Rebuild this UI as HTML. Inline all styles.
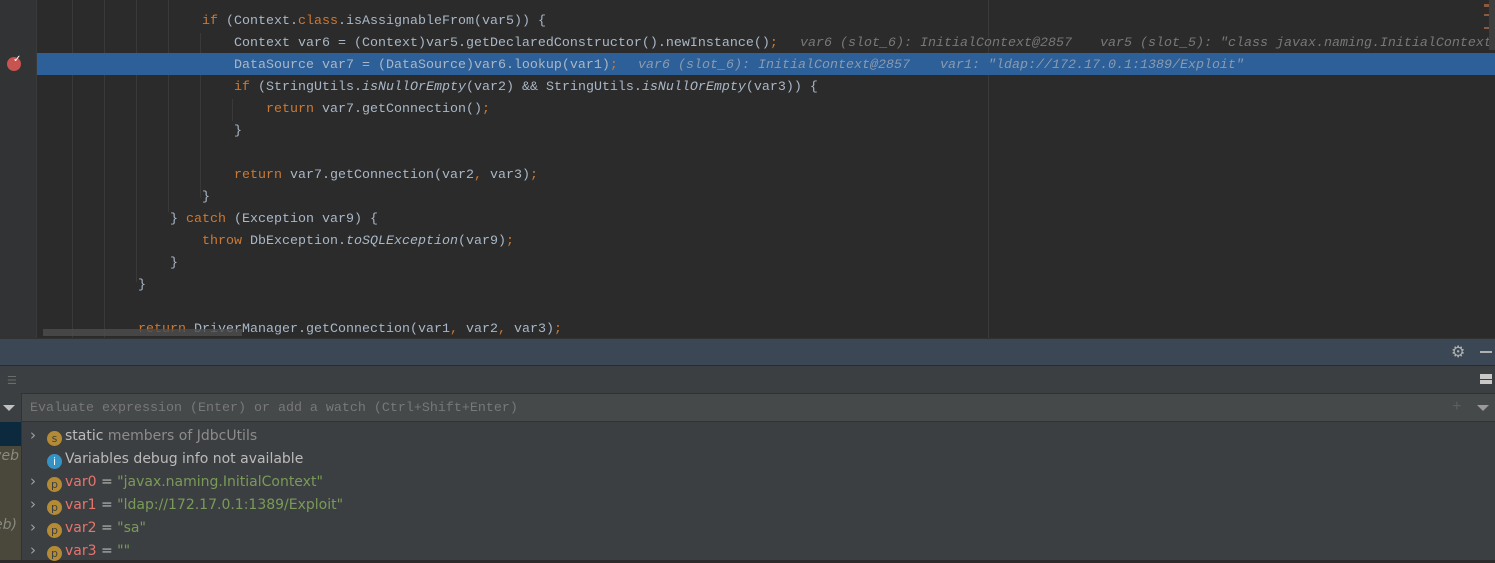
<!DOCTYPE html>
<html><head><style>
*{margin:0;padding:0;box-sizing:border-box}
body{width:1495px;height:560px;overflow:hidden;background:#2b2b2b;position:relative;font-family:"Liberation Mono",monospace}
.gut{position:absolute;left:0;top:0;width:37px;height:339px;background:#313335;border-right:1px solid #3a3a3a}
.ln{position:absolute;left:0;height:22px;line-height:22px;font-size:13.33px;color:#a9b7c6;white-space:pre}
.k{color:#cc7832}.i{font-style:italic}.h{color:#787878;font-style:italic;position:absolute}
.g{position:absolute;width:1px;background:#393939}
.sel{position:absolute;left:37px;top:53px;width:1458px;height:22px;background:#2d5f98}
.p{position:absolute;left:0;width:1495px}
.row{position:absolute;left:30px;height:23px;line-height:23px;font-family:"DejaVu Sans",sans-serif;font-size:14px;color:#bbbbbb;white-space:pre}
.ic{display:inline-block;width:15px;height:15px;border-radius:50%;background:#b58a35;color:#3c3f41;font-size:11px;line-height:15px;text-align:center;vertical-align:-2px;margin-right:3px}
.ch{display:inline-block;width:17px;color:#a0a0a0;font-size:15px}
.red{color:#e8746c}.str{color:#7a9a58}
</style></head><body>
<div class="gut"></div>
<div class="g" style="left:72px;top:0;height:339px"></div>
<div class="g" style="left:104px;top:0;height:339px"></div>
<div class="g" style="left:136px;top:0;height:282px"></div>
<div class="g" style="left:168px;top:0;height:212px"></div>
<div class="g" style="left:200px;top:33px;height:165px"></div>
<div class="g" style="left:232px;top:99px;height:22px"></div>
<div class="g" style="left:988px;top:0;height:339px;background:#3a3a3a"></div>
<div class="sel"></div>
<div style="position:absolute;left:7px;top:57px;width:14px;height:14px;border-radius:50%;background:#c75450"></div>
<div style="position:absolute;left:13px;top:54px;color:#fff;font-size:10px;font-family:'DejaVu Sans'">✓</div>
<div class="ln" style="top:11px;left:202px"><span class="k">if</span> (Context.<span class="k">class</span>.isAssignableFrom(var5)) {</div>
<div class="ln" style="top:33px;left:234px">Context var6 = (Context)var5.getDeclaredConstructor().newInstance()<span class="k">;</span></div>
<div class="ln h" style="top:33px;left:800px">var6 (slot_6): InitialContext@2857</div>
<div class="ln h" style="top:33px;left:1100px">var5 (slot_5): "class javax.naming.InitialContext"</div>
<div class="ln" style="top:55px;left:234px">DataSource var7 = (DataSource)var6.lookup(var1)<span class="k">;</span></div>
<div class="ln h" style="top:55px;left:638px;color:#8a9bb0">var6 (slot_6): InitialContext@2857</div>
<div class="ln h" style="top:55px;left:940px;color:#8a9bb0">var1: "ldap://172.17.0.1:1389/Exploit"</div>
<div class="ln" style="top:77px;left:234px"><span class="k">if</span> (StringUtils.<span class="i">isNullOrEmpty</span>(var2) &amp;&amp; StringUtils.<span class="i">isNullOrEmpty</span>(var3)) {</div>
<div class="ln" style="top:99px;left:266px"><span class="k">return</span> var7.getConnection()<span class="k">;</span></div>
<div class="ln" style="top:121px;left:234px">}</div>
<div class="ln" style="top:165px;left:234px"><span class="k">return</span> var7.getConnection(var2<span class="k">,</span> var3)<span class="k">;</span></div>
<div class="ln" style="top:187px;left:202px">}</div>
<div class="ln" style="top:209px;left:170px">} <span class="k">catch</span> (Exception var9) {</div>
<div class="ln" style="top:231px;left:202px"><span class="k">throw</span> DbException.<span class="i">toSQLException</span>(var9)<span class="k">;</span></div>
<div class="ln" style="top:253px;left:170px">}</div>
<div class="ln" style="top:275px;left:138px">}</div>
<div class="ln" style="top:319px;left:138px"><span class="k">return</span> DriverManager.getConnection(var1<span class="k">,</span> var2<span class="k">,</span> var3)<span class="k">;</span></div>
<div style="position:absolute;left:43px;top:329px;width:199px;height:7px;background:#4e4e4e;opacity:.8"></div>
<div style="position:absolute;left:1484px;top:4px;width:6px;height:3px;background:#8c5a3c"></div>
<div style="position:absolute;left:1484px;top:14px;width:6px;height:2px;background:#8c5a3c"></div>
<div style="position:absolute;left:1484px;top:27px;width:6px;height:2px;background:#8c5a3c"></div>
<div style="position:absolute;left:1489px;top:0;width:6px;height:50px;background:#3e3e3e"></div>

<div class="p" style="top:338px;height:1px;background:#323232"></div>
<div class="p" style="top:339px;height:26px;background:#3b4754"></div>
<div style="position:absolute;left:1451px;top:342px;color:#b0b0b0;font-size:16px;font-family:'DejaVu Sans'">⚙</div>
<div style="position:absolute;left:1480px;top:351px;width:12px;height:2px;background:#b0b0b0"></div>
<div class="p" style="top:365px;height:1px;background:#2b2b2b"></div>
<div class="p" style="top:366px;height:27px;background:#3c3f41"></div>
<div style="position:absolute;left:7px;top:374px;color:#6c6c6c;font-size:11px;font-family:'DejaVu Sans'">☰</div>
<div style="position:absolute;left:1480px;top:374px;width:12px;height:5px;background:#c8c8c8"></div>
<div style="position:absolute;left:1480px;top:380px;width:12px;height:4px;background:#c8c8c8"></div>
<div class="p" style="top:393px;height:29px;background:#45494a;border-top:1px solid #323232;border-bottom:1px solid #323232"></div>
<div style="position:absolute;left:21px;top:393px;width:1px;height:167px;background:#323232"></div>
<div style="position:absolute;left:0;top:393px;width:21px;height:29px;background:#3c3f41"></div>
<div style="position:absolute;left:3px;top:405px;border-left:6px solid transparent;border-right:6px solid transparent;border-top:6px solid #c0c0c0"></div>
<div style="position:absolute;left:30px;top:394px;height:29px;line-height:30px;font-size:13.33px;color:#787878;white-space:pre">Evaluate expression (Enter) or add a watch (Ctrl+Shift+Enter)</div>
<div style="position:absolute;left:1452px;top:398px;color:#5e5e5e;font-size:16px">+</div>
<div style="position:absolute;left:1477px;top:405px;border-left:6px solid transparent;border-right:6px solid transparent;border-top:6px solid #9a9a9a"></div>
<div style="position:absolute;left:22px;top:422px;width:1473px;height:138px;background:#3c3f41"></div>
<div style="position:absolute;left:0;top:422px;width:21px;height:24px;background:#0d293e"></div>
<div style="position:absolute;left:0;top:446px;width:21px;height:114px;background:#4a473b"></div>
<div style="position:absolute;left:0;top:448px;font-family:'DejaVu Sans';font-style:italic;font-size:14px;color:#8a8a80;margin-left:-10px">web</div>
<div style="position:absolute;left:0;top:517px;font-family:'DejaVu Sans';font-style:italic;font-size:14px;color:#8a8a80;margin-left:-6px">eb)</div>
<div class="row" style="top:424px"><span class="ch">›</span><span class="ic">s</span>static <span style="color:#8c8c8c">members of JdbcUtils</span></div>
<div class="row" style="top:447px"><span class="ch"> </span><span class="ic" style="background:#3592c4;color:#fff">i</span>Variables debug info not available</div>
<div class="row" style="top:470px"><span class="ch">›</span><span class="ic">p</span><span class="red">var0</span> = <span class="str">"javax.naming.InitialContext"</span></div>
<div class="row" style="top:493px"><span class="ch">›</span><span class="ic">p</span><span class="red">var1</span> = <span class="str">"ldap://172.17.0.1:1389/Exploit"</span></div>
<div class="row" style="top:516px"><span class="ch">›</span><span class="ic">p</span><span class="red">var2</span> = <span class="str">"sa"</span></div>
<div class="row" style="top:539px"><span class="ch">›</span><span class="ic">p</span><span class="red">var3</span> = <span class="str">""</span></div>
</body></html>
